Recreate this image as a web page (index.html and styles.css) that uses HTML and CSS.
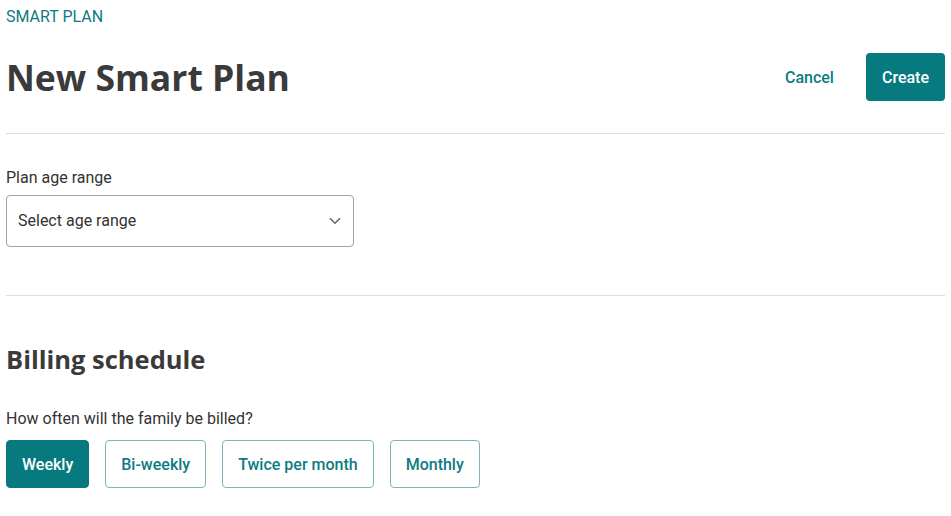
FILE: index.html
```html
<!DOCTYPE html>
<html lang="en">
<head>
<meta charset="utf-8">
<title>New Smart Plan</title>
<link rel="stylesheet" href="styles.css">
</head>
<body>
<div class="page">
  <div class="eyebrow">SMART PLAN</div>
  <div class="title-row">
    <h1 class="title">New Smart Plan</h1>
    <div class="actions">
      <button class="btn-link">Cancel</button>
      <button class="btn-primary">Create</button>
    </div>
  </div>
  <hr class="divider">
  <section class="section-age">
    <label class="field-label">Plan age range</label>
    <div class="select">
      <span class="select-text">Select age range</span>
      <svg class="chevron" width="12" height="8" viewBox="0 0 12 8"><path d="M1 1.2l5 5 5-5" fill="none" stroke="#666" stroke-width="1.6"/></svg>
    </div>
  </section>
  <hr class="divider">
  <section class="section-billing">
    <h2 class="section-title">Billing schedule</h2>
    <p class="question">How often will the family be billed?</p>
    <div class="options">
      <button class="opt opt-active">Weekly</button>
      <button class="opt">Bi-weekly</button>
      <button class="opt">Twice per month</button>
      <button class="opt">Monthly</button>
    </div>
  </section>
</div>
</body>
</html>
```

FILE: styles.css
```css
* { box-sizing: border-box; }
body {
  margin: 0;
  background: #fff;
  font-family: Roboto, "Liberation Sans", sans-serif;
  color: #333;
}
.page {
  padding: 7px 6px 0 6px;
}
.eyebrow {
  font-size: 16px;
  line-height: 20px;
  color: #0d7b82;
}
.title-row {
  display: flex;
  justify-content: space-between;
  align-items: center;
  margin-top: 26px;
  margin-bottom: 32px;
}
.title {
  margin: 0;
  font-family: "Open Sans", sans-serif;
  font-weight: 700;
  font-size: 35.5px;
  line-height: 48px;
  color: #3a3a3a;
}
.actions {
  display: flex;
  align-items: center;
  gap: 16px;
}
button {
  font-family: Roboto, "Liberation Sans", sans-serif;
  font-size: 16px;
  font-weight: 500;
  cursor: pointer;
}
.btn-link {
  background: none;
  border: none;
  color: #0d7b82;
  padding: 0 16px;
  height: 48px;
}
.btn-primary {
  background: #077a80;
  color: #fff;
  border: none;
  border-radius: 4px;
  height: 48px;
  padding: 0 16px;
}
.divider {
  border: none;
  border-top: 1px solid #dedede;
  margin: 0;
}
.section-age {
  padding: 34px 0 48px;
}
.field-label {
  display: block;
  font-size: 16px;
  line-height: 20px;
  color: #333;
}
.select {
  margin-top: 7px;
  width: 348px;
  height: 52px;
  border: 1px solid #a3a3a3;
  border-radius: 4px;
  display: flex;
  align-items: center;
  justify-content: space-between;
  padding: 0 12px 1px 11px;
}
.select-text {
  font-size: 16px;
  color: #333;
}
.chevron { display: block; }
.section-billing {
  padding-top: 47px;
}
.section-title {
  margin: 0;
  font-family: "Open Sans", sans-serif;
  font-weight: 700;
  font-size: 25.5px;
  line-height: 32px;
  color: #3a3a3a;
}
.question {
  margin: 34px 0 0;
  font-size: 16px;
  line-height: 20px;
  color: #333;
}
.options {
  margin-top: 11px;
  display: flex;
  gap: 16px;
}
.opt {
  height: 48px;
  padding: 0 15px;
  background: #fff;
  color: #0d7b82;
  border: 1px solid #7ab7bb;
  border-radius: 4px;
}
.opt-active {
  background: #077a80;
  border-color: #077a80;
  color: #fff;
}
```
